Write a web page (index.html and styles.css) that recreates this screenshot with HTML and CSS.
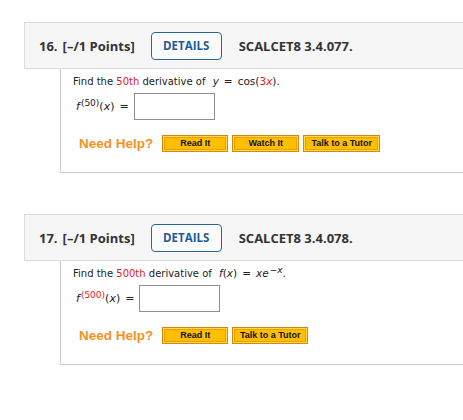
FILE: index.html
```html
<!DOCTYPE html>
<html>
<head>
<meta charset="utf-8">
<link rel="stylesheet" href="styles.css">
</head>
<body>
<div class="page">
  <div class="question">
    <div class="q-head">
      <span class="q-num">16.</span>
      <span class="q-pts">[–/1 Points]</span>
      <span class="details">DETAILS</span>
      <span class="code">SCALCET8 3.4.077.</span>
    </div>
    <div class="q-body">
      <div class="prompt">Find the <span class="red">50th</span> derivative of <span class="math"><i>y</i><span class="eq">=</span>cos(<span class="red">3<i>x</i></span>).</span></div>
      <div class="answer">
        <span class="math expr"><i>f</i><sup>(50)</sup>(<i>x</i>)<span class="eq">=</span></span>
        <span class="box"></span>
      </div>
      <div class="help">
        <span class="need">Need Help?</span>
        <span class="btn w-read">Read It</span>
        <span class="btn w-watch">Watch It</span>
        <span class="btn w-tutor">Talk to a Tutor</span>
      </div>
    </div>
  </div>

  <div class="question second">
    <div class="q-head">
      <span class="q-num">17.</span>
      <span class="q-pts">[–/1 Points]</span>
      <span class="details">DETAILS</span>
      <span class="code">SCALCET8 3.4.078.</span>
    </div>
    <div class="q-body">
      <div class="prompt">Find the <span class="red">500th</span> derivative of <span class="math"><i>f</i>(<i>x</i>)<span class="eq">=</span><i>xe</i><sup><i>−x</i></sup>.</span></div>
      <div class="answer">
        <span class="math expr"><i>f</i><sup class="red">(500)</sup>(<i>x</i>)<span class="eq">=</span></span>
        <span class="box"></span>
      </div>
      <div class="help">
        <span class="need">Need Help?</span>
        <span class="btn w-read">Read It</span>
        <span class="btn w-tutor2">Talk to a Tutor</span>
      </div>
    </div>
  </div>
</div>
</body>
</html>
```

FILE: styles.css
```css
html, body {
  margin: 0;
  padding: 0;
  background: #fff;
}

.page {
  padding: 22px 0 0 24px;
  overflow: hidden;
  width: 463px;
  box-sizing: border-box;
}

.question.second {
  margin-top: 41px;
}

.q-head {
  display: flex;
  align-items: center;
  height: 45px;
  border: 1px solid #dcdcdc;
  border-right: none;
  background: #f6f6f6;
  padding-left: 14px;
  font-family: "Open Sans", "DejaVu Sans", sans-serif;
  font-weight: 700;
  font-size: 13px;
  color: #333;
}

.q-num {
  margin-right: 5px;
}

.details {
  margin-left: 16px;
  width: 71px;
  height: 28px;
  box-sizing: border-box;
  border: 1px solid #2a649c;
  border-radius: 4px;
  background: #fbfbfb;
  color: #1f5c96;
  font-size: 11.5px;
  font-weight: 700;
  display: flex;
  align-items: center;
  justify-content: center;
}

.code {
  margin-left: 17px;
}

.q-body {
  margin-left: 36px;
  border-left: 1px solid #cacaca;
  border-bottom: 1px solid #cacaca;
  padding: 4px 0 20px 12px;
  font-family: "DejaVu Sans", Verdana, sans-serif;
  font-size: 10px;
  color: #222;
}

.prompt {
  line-height: 16px;
  height: 16px;
  white-space: nowrap;
}

.math {
  font-size: 10.5px;
  margin-left: 4px;
}

.eq {
  margin: 0 5px;
}

.red {
  color: #e3191f;
}

sup {
  font-size: 9px;
  line-height: 0;
  vertical-align: 4px;
  margin-left: 1px;
}

.answer {
  margin-top: 4px;
  display: flex;
  align-items: center;
  height: 27px;
}

.expr {
  margin-left: 3px;
  font-size: 11px;
}

.expr .eq {
  margin-right: 0;
}

.box {
  margin-left: 5px;
  width: 81px;
  height: 27px;
  box-sizing: border-box;
  border: 1px solid #8f8f8f;
  background: #fff;
}

.help {
  margin-top: 15px;
  margin-left: 6px;
  display: flex;
  align-items: center;
  height: 17px;
}

.need {
  font-family: "Liberation Sans", Arial, sans-serif;
  font-weight: 700;
  font-size: 13.5px;
  color: #f7901e;
  margin-right: 9px;
}

.btn {
  height: 17px;
  box-sizing: border-box;
  border: 1px solid #d8870a;
  background: #ffbf00;
  box-shadow: inset 0 0 0 1px #ffd84d, inset 0 0 0 2px #eea200;
  font-family: "Liberation Sans", Arial, sans-serif;
  font-weight: 700;
  font-size: 9px;
  line-height: 15px;
  color: #111;
  text-align: center;
  margin-right: 4px;
}

.w-read { width: 66px; }
.w-watch { width: 67px; }
.w-tutor { width: 77px; }
.w-tutor2 { width: 76px; }
```
